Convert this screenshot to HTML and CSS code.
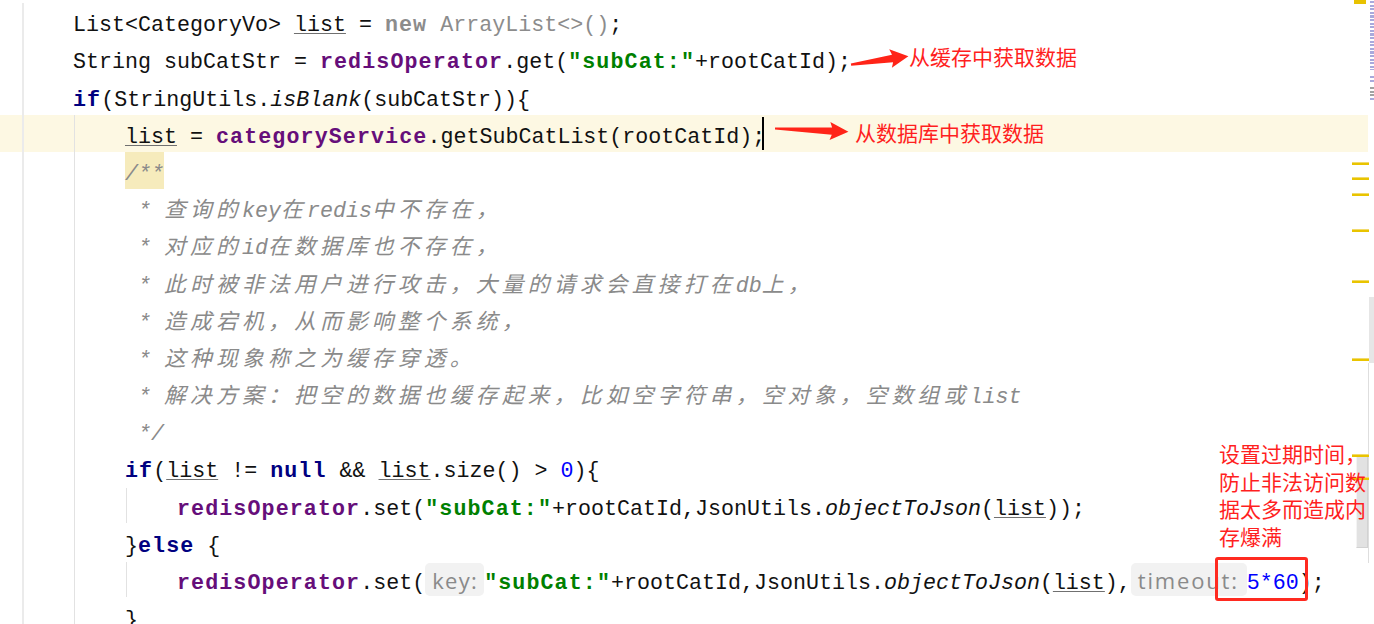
FILE: index.html
```
<!DOCTYPE html>
<html lang="zh">
<head>
<meta charset="utf-8">
<title>Editor</title>
<link rel="stylesheet" href="styles.css">
</head>
<body>
<div class="ide">
<div class="editor">
<div class="ln">List&lt;CategoryVo&gt; <u>list</u> = <span class="gr"><span class="kg">new</span> ArrayList&lt;&gt;()</span>;</div>
<div class="ln">String subCatStr = <span class="f">redisOperator</span>.get(<span class="s">"subCat:"</span>+rootCatId);</div>
<div class="ln"><span class="k">if</span>(StringUtils.<i>isBlank</i>(subCatStr)){</div>
<div class="ln g1 hl caretln">    <u>list</u> = <span class="f">categoryService</span>.getSubCatList(rootCatId);</div>
<div class="ln g1 brace">    <span class="c">/**</span></div>
<div class="ln g1">    <span class="c"> * <span class="z">查询的</span>key<span class="z">在</span>redis<span class="z">中不存在，</span></span></div>
<div class="ln g1">    <span class="c"> * <span class="z">对应的</span>id<span class="z">在数据库也不存在，</span></span></div>
<div class="ln g1">    <span class="c"> * <span class="z">此时被非法用户进行攻击，大量的请求会直接打在</span>db<span class="z">上，</span></span></div>
<div class="ln g1">    <span class="c"> * <span class="z">造成宕机，从而影响整个系统，</span></span></div>
<div class="ln g1">    <span class="c"> * <span class="z">这种现象称之为缓存穿透。</span></span></div>
<div class="ln g1">    <span class="c"> * <span class="z">解决方案：把空的数据也缓存起来，比如空字符串，空对象，空数组或</span>list</span></div>
<div class="ln g1">    <span class="c"> */</span></div>
<div class="ln g1">    <span class="k">if</span>(<u>list</u> != <span class="k">null</span> &amp;&amp; <u>list</u>.size() &gt; <span class="n">0</span>){</div>
<div class="ln g2">        <span class="f">redisOperator</span>.set(<span class="s">"subCat:"</span>+rootCatId,JsonUtils.<i>objectToJson</i>(<u>list</u>));</div>
<div class="ln g1">    }<span class="k">else</span> {</div>
<div class="ln g2">        <span class="f">redisOperator</span>.set(<span class="hint">key:</span><span class="s">"subCat:"</span>+rootCatId,JsonUtils.<i>objectToJson</i>(<u>list</u>),<span class="hint wide">timeout:</span><span class="n">5*60</span>);</div>
<div class="ln g1">    }</div>
</div>

<div class="mark top"></div>
<div class="lav l1"></div>
<div class="lav l2"></div>
<div class="lav gry"></div>
<div class="lav l3"></div>
<div class="thumb"></div>
<div class="vline"></div>
<div class="sbox"></div>
<div class="mk" style="top:162px"></div>
<div class="mk" style="top:177px"></div>
<div class="mk" style="top:193px"></div>
<div class="mk" style="top:229px"></div>
<div class="mk" style="top:280px"></div>
<div class="mk" style="top:358px"></div>
<div class="mk" style="top:454px"></div>
<div class="mk" style="top:477px"></div>

<svg class="arrows" width="1374" height="624" viewBox="0 0 1374 624">
<polygon fill="#ff2418" transform="translate(851 64.5) rotate(-8.3)" points="0,-1 42,-3.8 40,-9.5 58,0 40,9 42,3.8 0,1.2"/>
<polygon fill="#ff2418" transform="translate(775 128.5) rotate(2.6)" points="0,-1 57,-3.6 55,-9 73.5,0 55,9 57,3.6 0,1.1"/>
</svg>

<div class="note n1">从缓存中获取数据</div>
<div class="note n2">从数据库中获取数据</div>
<div class="note n3">设置过期时间，<br>防止非法访问数<br>据太多而造成内<br>存爆满</div>
<div class="redbox"></div>
</div>
</body>
</html>
```

FILE: styles.css
```
* { box-sizing: border-box; }
html, body { margin: 0; padding: 0; background: #fff; }

.ide {
  position: relative;
  width: 1374px;
  height: 624px;
  overflow: hidden;
  background: #fff;
}

.editor {
  width: 1368px;
  padding-top: 3.4px;
}

.ln {
  height: 37.2px;
  padding: 8.8px 0 0 73px;
  line-height: 28.4px;
  white-space: pre;
  font-family: "Liberation Mono", "Noto Sans CJK SC", monospace;
  font-size: 21.67px;
  color: #111;
  background-image: linear-gradient(#ebebeb, #ebebeb);
  background-position: 22px 0;
  background-size: 2px 100%;
  background-repeat: no-repeat;
}

.g1 {
  background-image: linear-gradient(#ebebeb, #ebebeb), linear-gradient(#e2e2e2, #e2e2e2);
  background-position: 22px 0, 74px 0;
  background-size: 2px 100%, 1px 100%;
}

.g2 {
  background-image: linear-gradient(#ebebeb, #ebebeb), linear-gradient(#e2e2e2, #e2e2e2), linear-gradient(#e2e2e2, #e2e2e2);
  background-position: 22px 0, 74px 0, 126px 1px;
  background-size: 2px 100%, 1px 100%, 1px 35px;
}

.hl { background-color: #fdf8e3; }

.caretln {
  background-image: linear-gradient(#000, #000), linear-gradient(#ebebeb, #ebebeb), linear-gradient(#e2e2e2, #e2e2e2);
  background-position: 762px 2px, 22px 0, 74px 0;
  background-size: 2px 33px, 2px 100%, 1px 100%;
}

.brace {
  background-image: linear-gradient(#f6ebbc, #f6ebbc), linear-gradient(#ebebeb, #ebebeb), linear-gradient(#e2e2e2, #e2e2e2);
  background-position: 125px 0, 22px 0, 74px 0;
  background-size: 39px 100%, 2px 100%, 1px 100%;
}

.k { color: #000080; font-weight: bold; letter-spacing: 1.1px; }
.kg { font-weight: bold; letter-spacing: 1.1px; }
.f { color: #660e7a; font-weight: bold; letter-spacing: 1.1px; }
.s { color: #008000; font-weight: bold; letter-spacing: 1.1px; }
.n { color: #0000ff; }
.gr { color: #8c8c8c; }
.c { color: #8a8a8a; font-style: italic; }
.z { letter-spacing: 4.33px; }
i { font-style: italic; }
u {
  text-decoration: underline;
  text-decoration-color: #707070;
  text-decoration-thickness: 1px;
  text-underline-offset: 2px;
}

.hint {
  font-family: "Open Sans", sans-serif;
  font-size: 22px;
  font-style: normal;
  font-weight: normal;
  letter-spacing: 1.3px;
  color: #8a8a8a;
  background: #f2f2f2;
  border-radius: 5px;
  padding: 1.5px 6px 1.5px 7px;
  line-height: 10px;
  vertical-align: 1px;
}
.hint.wide {
  letter-spacing: 1.8px;
  padding-right: 8px;
}

/* right-side error stripe */
.mark.top {
  position: absolute; left: 1354px; top: 0; width: 12px; height: 4px; background: #e8c200;
}
.lav { position: absolute; left: 1370px; width: 4px; }
.l1 { top: 1px; height: 69px; background: repeating-linear-gradient(#a9a9dc 0 2.2px, #fff 2.2px 3.6px); }
.l2 { top: 76px; height: 6px; background: repeating-linear-gradient(#a9a9dc 0 2.2px, #fff 2.2px 3.6px); }
.gry { top: 87px; height: 10px; background: repeating-linear-gradient(#a2a2a2 0 2.2px, #fff 2.2px 3.6px); }
.l3 { top: 98px; height: 2px; background: #a9a9dc; }
.thumb { position: absolute; left: 1369px; top: 297px; width: 5px; height: 66px; background: #e6e6e6; }
.vline { position: absolute; left: 1368px; top: 363px; width: 1px; height: 200px; background: #dedede; }
.sbox { position: absolute; left: 1356px; top: 455px; width: 12px; height: 93px; background: #e2e2e2; border: 1px solid #d2d2d2; border-left-color: #f4f4f4; }
.mk {
  position: absolute; left: 1352px; width: 17px; height: 3px;
  background: #e9c400; border-top: 1px solid #f2da6a;
}

.arrows { position: absolute; left: 0; top: 0; pointer-events: none; }

.note {
  position: absolute;
  font-family: "Noto Sans CJK SC", sans-serif;
  font-size: 21px;
  color: #ff1f1f;
  white-space: nowrap;
}
.n1 { left: 909px; top: 42px; line-height: 28px; }
.n2 { left: 855px; top: 118px; line-height: 28px; }
.n3 { left: 1219px; top: 440px; line-height: 27.6px; }

.redbox {
  position: absolute;
  left: 1215px; top: 557px; width: 93px; height: 44px;
  border: 3px solid #ff2a20;
  border-radius: 3px;
}
```
